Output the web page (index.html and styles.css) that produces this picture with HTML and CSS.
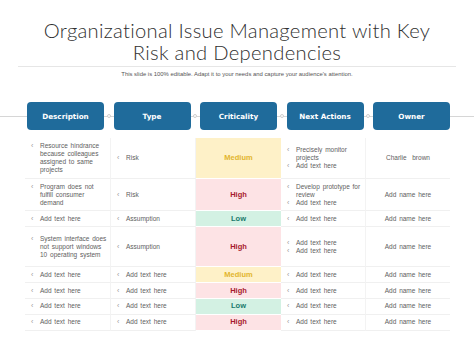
FILE: index.html
```html
<!DOCTYPE html>
<html>
<head>
<meta charset="utf-8">
<link rel="stylesheet" href="styles.css">
</head>
<body>
<div class="slide">
  <h1 class="title">Organizational Issue Management with Key<br>Risk and Dependencies</h1>
  <div class="rule"></div>
  <p class="subtitle">This slide is 100% editable. Adapt it to your needs and capture your audience's attention.</p>

  <div class="headers">
    <span class="line lead"></span>
    <div class="hbox">Description</div>
    <span class="line join"><i class="dot"></i></span>
    <div class="hbox">Type</div>
    <span class="line join"><i class="dot"></i></span>
    <div class="hbox">Criticality</div>
    <span class="line join"><i class="dot"></i></span>
    <div class="hbox">Next Actions</div>
    <span class="line join"><i class="dot"></i></span>
    <div class="hbox">Owner</div>
    <span class="line tail"></span>
  </div>

  <div class="table">
    <!-- row 1 -->
    <div class="cell"><ul><li>Resource hindrance because colleagues assigned to same projects</li></ul></div>
    <div class="cell"><ul><li>Risk</li></ul></div>
    <div class="cell crit medium">Medium</div>
    <div class="cell"><ul><li>Precisely monitor projects</li><li>Add text here</li></ul></div>
    <div class="cell owner">Charlie&nbsp; brown</div>
    <!-- row 2 -->
    <div class="cell"><ul><li>Program does not fulfill consumer demand</li></ul></div>
    <div class="cell"><ul><li>Risk</li></ul></div>
    <div class="cell crit high">High</div>
    <div class="cell"><ul><li>Develop prototype for review</li><li>Add text here</li></ul></div>
    <div class="cell owner">Add name here</div>
    <!-- row 3 -->
    <div class="cell"><ul><li>Add text here</li></ul></div>
    <div class="cell"><ul><li>Assumption</li></ul></div>
    <div class="cell crit low">Low</div>
    <div class="cell"><ul><li>Add text here</li></ul></div>
    <div class="cell owner">Add name here</div>
    <!-- row 4 -->
    <div class="cell"><ul><li>System interface does not support windows 10 operating system</li></ul></div>
    <div class="cell"><ul><li>Assumption</li></ul></div>
    <div class="cell crit high">High</div>
    <div class="cell"><ul><li>Add text here</li><li>Add text here</li></ul></div>
    <div class="cell owner">Add name here</div>
    <!-- row 5 -->
    <div class="cell"><ul><li>Add text here</li></ul></div>
    <div class="cell"><ul><li>Add text here</li></ul></div>
    <div class="cell crit medium">Medium</div>
    <div class="cell"><ul><li>Add text here</li></ul></div>
    <div class="cell owner">Add name here</div>
    <!-- row 6 -->
    <div class="cell"><ul><li>Add text here</li></ul></div>
    <div class="cell"><ul><li>Add text here</li></ul></div>
    <div class="cell crit high">High</div>
    <div class="cell"><ul><li>Add text here</li></ul></div>
    <div class="cell owner">Add name here</div>
    <!-- row 7 -->
    <div class="cell"><ul><li>Add text here</li></ul></div>
    <div class="cell"><ul><li>Add text here</li></ul></div>
    <div class="cell crit low">Low</div>
    <div class="cell"><ul><li>Add text here</li></ul></div>
    <div class="cell owner">Add name here</div>
    <!-- row 8 -->
    <div class="cell"><ul><li>Add text here</li></ul></div>
    <div class="cell"><ul><li>Add text here</li></ul></div>
    <div class="cell crit high">High</div>
    <div class="cell"><ul><li>Add text here</li></ul></div>
    <div class="cell owner">Add name here</div>
  </div>
</div>
</body>
</html>
```

FILE: styles.css
```css
* { box-sizing: border-box; }
html, body { margin: 0; padding: 0; background: #ffffff; }
.slide {
  width: 474px;
  height: 355px;
  overflow: hidden;
  font-family: "Liberation Sans", Arial, sans-serif;
  padding-top: 19px;
}
.title {
  margin: 0;
  font-family: Lato, "DejaVu Sans", sans-serif;
  font-weight: 300;
  font-size: 20.2px;
  line-height: 22px;
  color: #2f2f2f;
  text-align: center;
  letter-spacing: 0.3px;
}
.rule {
  height: 1px;
  background: #e6e6e6;
  margin: 3px 18px 0 18px;
}
.subtitle {
  margin: 3px 0 0 0;
  font-size: 5.9px;
  line-height: 8px;
  color: #555;
  text-align: center;
}
.headers {
  display: flex;
  align-items: center;
  margin-top: 24px;
  height: 28px;
}
.hbox {
  flex: 0 0 77px;
  height: 28px;
  background: #1f6b9b;
  border-radius: 4px;
  color: #ffffff;
  font-family: "DejaVu Sans", sans-serif;
  font-weight: bold;
  font-size: 7.2px;
  display: flex;
  align-items: center;
  justify-content: center;
}
.line {
  height: 1px;
  background: #d6d6d6;
  display: flex;
  align-items: center;
  justify-content: center;
}
.lead { flex: 0 0 27px; }
.join { flex: 0 0 9.5px; }
.tail { flex: 1 1 auto; }
.dot {
  display: block;
  width: 4px;
  height: 4px;
  border: 1px solid #cfcfcf;
  border-radius: 50%;
  background: #fff;
}
.table {
  display: grid;
  grid-template-columns: 86px 85px 85px 85px 84px;
  grid-template-rows: 41px 32px 16px 40px 16px 16px 15.5px 16px;
  margin: 8px 0 0 25px;
  width: 425px;
}
.cell {
  display: flex;
  align-items: center;
  border-bottom: 1px solid #f0f0f0;
  border-right: 1px solid #f3f3f3;
  font-size: 6.5px;
  line-height: 8px;
  word-spacing: 1px;
  color: #606060;
  padding: 0 2px 0 6px;
}
.cell:nth-child(5n) { border-right: none; }
.cell ul { list-style: none; margin: 0; padding: 0; }
.cell li {
  position: relative;
  padding-left: 9px;
}
.cell li::before {
  content: "\2039";
  position: absolute;
  left: 0;
  top: 0;
  font-size: 7px;
  color: #999;
}
.crit {
  justify-content: center;
  font-family: "Liberation Sans", Arial, sans-serif;
  font-weight: bold;
  font-size: 7.5px;
  word-spacing: 0;
  border-right: none;
  border-bottom: 1px solid #ffffff;
  padding: 0;
}
.medium { background: #fef1c8; color: #e2b52e; }
.high { background: #fde3e5; color: #a71a2e; }
.low { background: #d3f1e3; color: #1a7a6c; }
.owner { justify-content: center; padding: 0 4px; }
```
